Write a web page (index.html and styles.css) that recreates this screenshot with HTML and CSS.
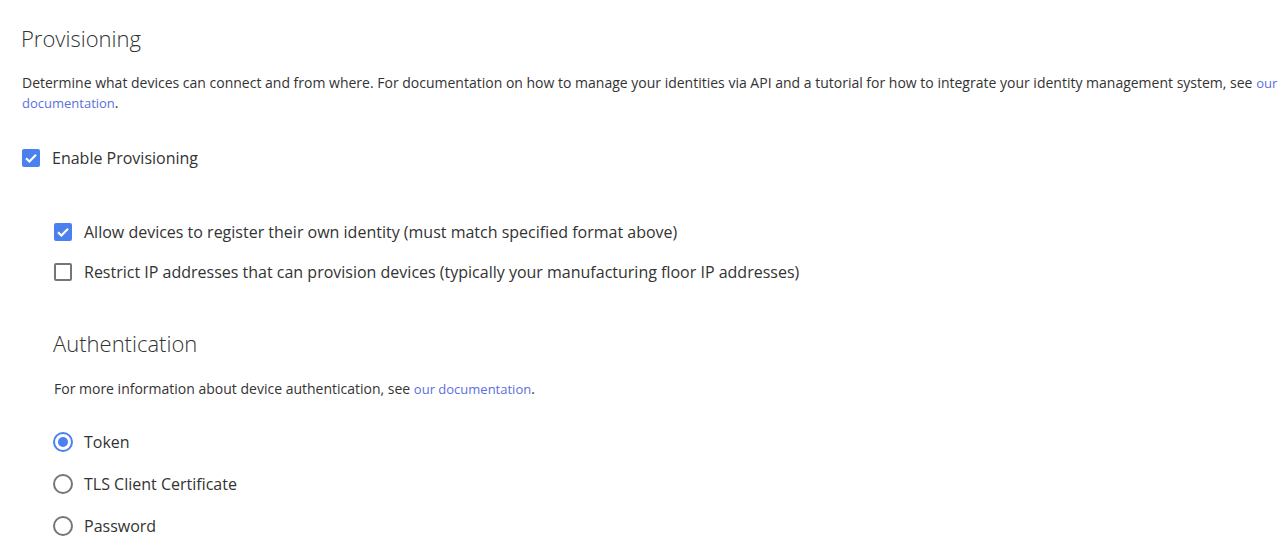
FILE: index.html
```html
<!DOCTYPE html>
<html lang="en">
<head>
    <meta charset="UTF-8">
    <meta name="viewport" content="width=device-width, initial-scale=1.0">
    <title>Provisioning</title>
    <link rel="stylesheet" href="styles.css">
</head>
<body>
    <div class="section">
        <h2>Provisioning</h2>
        <p class="desc">Determine what devices can connect and from where. For documentation on how to manage your identities via API and a tutorial for how to integrate your identity management system, see <a href="#">our</a> <a href="#">documentation</a>.</p>

        <label class="check top">
            <span class="box checked"><svg viewBox="0 0 14 14"><path d="M2 7.2l3.4 3.3L12 3.8" fill="none" stroke="#fff" stroke-width="2.2"/></svg></span>
            Enable Provisioning
        </label>

        <div class="nested">
            <label class="check">
                <span class="box checked"><svg viewBox="0 0 14 14"><path d="M2 7.2l3.4 3.3L12 3.8" fill="none" stroke="#fff" stroke-width="2.2"/></svg></span>
                Allow devices to register their own identity (must match specified format above)
            </label>
            <label class="check">
                <span class="box"></span>
                Restrict IP addresses that can provision devices (typically your manufacturing floor IP addresses)
            </label>

            <h2 class="sub">Authentication</h2>
            <p class="desc">For more information about device authentication, see <a href="#">our documentation</a>.</p>

            <div class="radios">
                <label class="radio"><span class="circle on"></span>Token</label>
                <label class="radio"><span class="circle"></span>TLS Client Certificate</label>
                <label class="radio"><span class="circle"></span>Password</label>
            </div>
        </div>
    </div>
</body>
</html>
```

FILE: styles.css
```css
body {
    font-family: "Open Sans", Arial, sans-serif;
    margin: 0;
    background-color: #fff;
    color: #333;
}
.section {
    padding: 23px 4px 0 21px;
}
h2 {
    font-weight: 300;
    font-size: 22px;
    line-height: 30px;
    margin: 0 0 20px 0;
    color: #333;
}
.desc {
    font-size: 14px;
    line-height: 20px;
    margin: 0 0 0 1px;
}
a {
    color: #5c6fe0;
    font-size: 13px;
    text-decoration: none;
}
.check {
    display: flex;
    align-items: center;
    gap: 12px;
    font-size: 16px;
    height: 24px;
    margin-left: 1px;
}
.check.top {
    margin-top: 33px;
}
.nested {
    padding-left: 32px;
    padding-top: 50px;
}
.nested .check {
    margin-bottom: 16px;
}
.box {
    width: 14px;
    height: 14px;
    border: 2px solid #767676;
    border-radius: 2px;
    display: inline-block;
    flex-shrink: 0;
}
.box.checked {
    background-color: #4b80ef;
    border-color: #4b80ef;
}
.box svg {
    width: 14px;
    height: 14px;
    display: block;
}
.sub {
    margin-top: 44px;
    margin-bottom: 21px;
}
.radios {
    margin-top: 31px;
    display: flex;
    flex-direction: column;
    gap: 18px;
}
.radio {
    display: flex;
    align-items: center;
    gap: 11px;
    font-size: 16px;
    height: 24px;
}
.circle {
    width: 16px;
    height: 16px;
    border: 2px solid #767676;
    border-radius: 50%;
    display: flex;
    align-items: center;
    justify-content: center;
    flex-shrink: 0;
}
.circle.on {
    border-color: #4b80ef;
}
.circle.on::after {
    content: "";
    width: 10px;
    height: 10px;
    border-radius: 50%;
    background-color: #4b80ef;
}
```
